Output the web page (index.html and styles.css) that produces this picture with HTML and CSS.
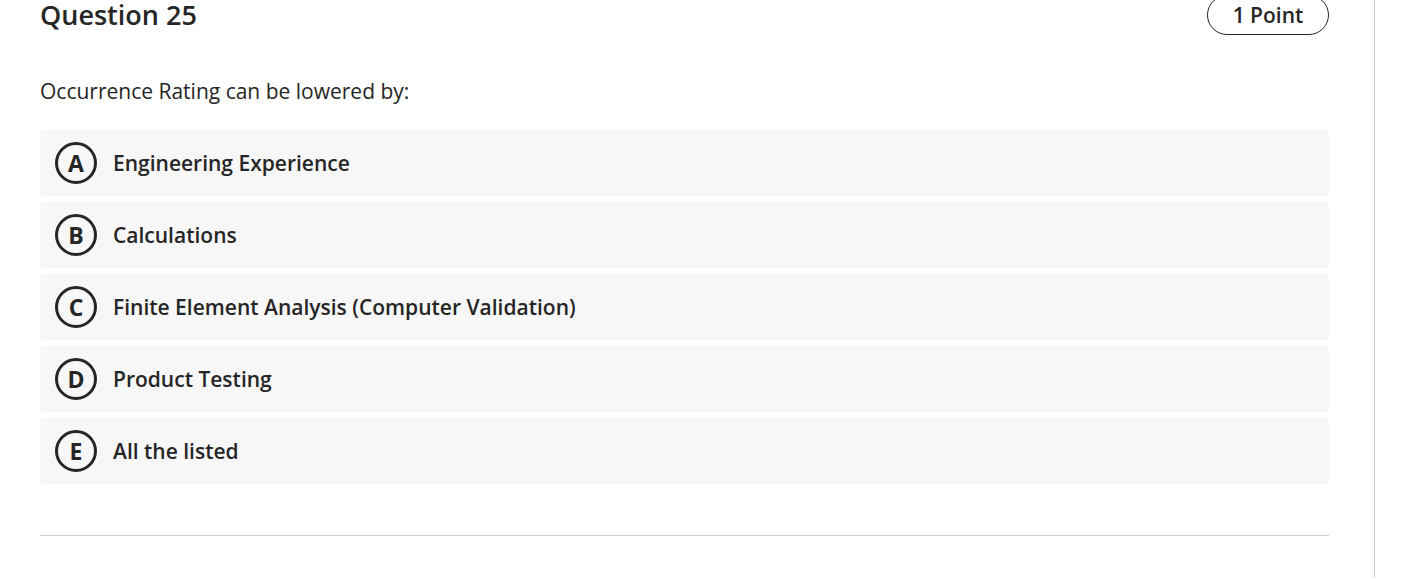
FILE: index.html
```html
<!DOCTYPE html>
<html>
<head>
<meta charset="utf-8">
<link rel="stylesheet" href="styles.css">
</head>
<body>
<div class="page">
  <div class="main">
    <div class="header">
      <h2 class="title">Question 25</h2>
      <div class="points">1 Point</div>
    </div>
    <p class="prompt">Occurrence Rating can be lowered by:</p>
    <div class="options">
      <div class="option"><span class="letter">A</span><span class="label">Engineering Experience</span></div>
      <div class="option"><span class="letter">B</span><span class="label">Calculations</span></div>
      <div class="option"><span class="letter">C</span><span class="label">Finite Element Analysis (Computer Validation)</span></div>
      <div class="option"><span class="letter">D</span><span class="label">Product Testing</span></div>
      <div class="option"><span class="letter">E</span><span class="label">All the listed</span></div>
    </div>
    <div class="divider"></div>
  </div>
</div>
</body>
</html>
```
FILE: styles.css
```css
html, body {
  margin: 0;
  padding: 0;
  background: #fff;
}
body {
  font-family: "Open Sans", "Liberation Sans", sans-serif;
  color: #262626;
  overflow: hidden;
  height: 582px;
}
.page {
  width: 1375px;
  height: 582px;
  border-right: 1px solid #c8c8c8;
  box-sizing: border-box;
  padding: 0 45px 0 40px;
}
.main {
  width: 1289px;
  margin-top: -5px;
}
.header {
  display: flex;
  justify-content: space-between;
  align-items: center;
  height: 40px;
}
.title {
  margin: 0;
  font-size: 27px;
  font-weight: 600;
  line-height: 30px;
}
.points {
  box-sizing: border-box;
  height: 40px;
  width: 122px;
  border: 1px solid #262626;
  border-radius: 20px;
  display: flex;
  align-items: center;
  justify-content: center;
  font-size: 21px;
  font-weight: 600;
}
.prompt {
  margin: 42px 0 0 0;
  font-size: 21px;
  line-height: 28px;
  font-weight: 400;
}
.options {
  margin-top: 25px;
  display: flex;
  flex-direction: column;
  gap: 6px;
}
.option {
  height: 66px;
  background: #f7f7f7;
  border-radius: 4px;
  display: flex;
  align-items: center;
  padding-left: 15px;
}
.letter {
  box-sizing: border-box;
  width: 42px;
  height: 42px;
  border: 3px solid #262626;
  border-radius: 50%;
  display: flex;
  align-items: center;
  justify-content: center;
  font-size: 23px;
  font-weight: 700;
  line-height: 1;
  flex-shrink: 0;
}
.label {
  margin-left: 16px;
  font-size: 21px;
  font-weight: 600;
}
.divider {
  margin-top: 51px;
  height: 1px;
  background: #cdcdcd;
}
```
